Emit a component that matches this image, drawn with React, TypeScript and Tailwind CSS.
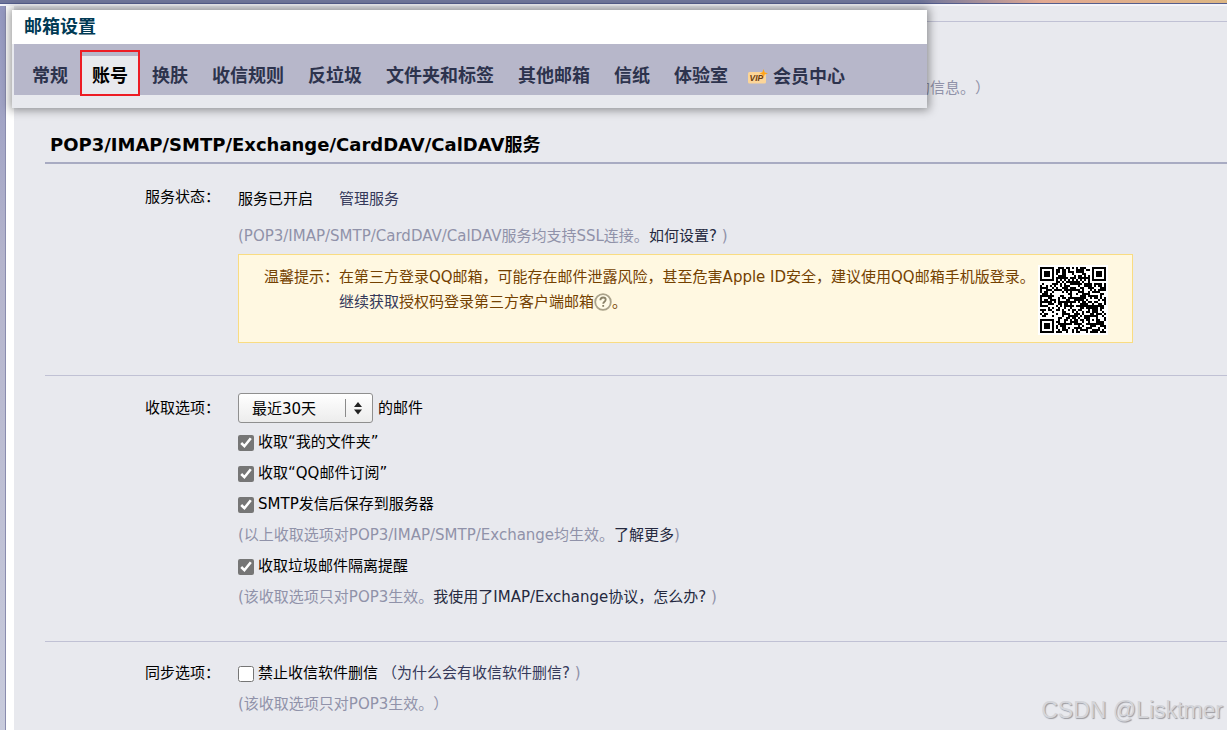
import React from "react";

const tabs = [
  "常规",
  "账号",
  "换肤",
  "收信规则",
  "反垃圾",
  "文件夹和标签",
  "其他邮箱",
  "信纸",
  "体验室",
];

const QR_SIZE = 33;

const finders = [
  [0, 0],
  [QR_SIZE - 7, 0],
  [0, QR_SIZE - 7],
];

// ring of size 7 with a 3x3 centre, null outside the finder areas
const finderModule = (x: number, y: number) => {
  for (const [fx, fy] of finders) {
    const dx = x - fx;
    const dy = y - fy;
    if (dx >= -1 && dx <= 7 && dy >= -1 && dy <= 7) {
      const d = Math.max(Math.abs(dx - 3), Math.abs(dy - 3));
      return d === 3 || d <= 1;
    }
  }
  return null;
};

const isDark = (x: number, y: number) => {
  const finder = finderModule(x, y);
  if (finder !== null) return finder;
  const a = Math.max(Math.abs(x - 26), Math.abs(y - 26));
  if (a <= 2) return a !== 1;
  if (x === 6) return y % 2 === 0;
  if (y === 6) return x % 2 === 0;
  const n = Math.sin(x * 12.9898 + y * 78.233) * 43758.5453;
  return n - Math.floor(n) > 0.46;
};

const qrPath = () => {
  let d = "";
  for (let y = 0; y < QR_SIZE; y++) {
    for (let x = 0; x < QR_SIZE; x++) {
      if (isDark(x, y)) d += `M${x} ${y}h1v1h-1z`;
    }
  }
  return d;
};

const QrCode = () => (
  <svg
    className="w-[70px] h-[70px] shrink-0 bg-white"
    viewBox="-1 -1 35 35"
    shapeRendering="crispEdges"
    role="img"
  >
    <path d={qrPath()} fill="#000" />
  </svg>
);

const VipIcon = () => (
  <svg className="w-5 h-4" viewBox="0 0 20 16">
    <rect x="0" y="3" width="18" height="11.5" rx="1.5" fill="#fcd598" />
    <text
      x="1.5"
      y="11.8"
      fontSize="8.5"
      fontWeight="700"
      fontStyle="italic"
      fontFamily="Liberation Sans, sans-serif"
      fill="#6b3d12"
    >
      VIP
    </text>
    <path
      d="M15.5 0 L16.6 3.2 L20 4.4 L16.6 5.6 L15.5 9 L14.4 5.6 L11.5 4.4 L14.4 3.2 Z"
      fill="#ffa41c"
    />
  </svg>
);

const HelpIcon = () => (
  <svg className="inline-block w-[18px] h-[18px] align-[-4px]" viewBox="0 0 18 18">
    <circle cx="9" cy="9" r="7.8" fill="#fffbe8" stroke="#aaa28a" strokeWidth="1.8" />
    <path
      d="M6.4 7.2c0-1.7 1.1-2.7 2.7-2.7s2.6 1 2.6 2.3c0 1.9-2.5 1.9-2.5 3.9"
      fill="none"
      stroke="#8a8268"
      strokeWidth="1.8"
    />
    <rect x="8.3" y="12" width="1.8" height="1.8" fill="#8a8268" />
  </svg>
);

const Check = ({
  label,
  checked = false,
}: {
  label: string;
  checked?: boolean;
}) => (
  <label className="flex items-center gap-1">
    <input
      type="checkbox"
      defaultChecked={checked}
      className="size-4 accent-[#767676]"
    />
    {label}
  </label>
);

const Row = ({
  label,
  children,
}: {
  label: string;
  children: React.ReactNode;
}) => (
  <div className="flex gap-[18px]">
    <div className="w-[175px] shrink-0 text-right leading-[31px]">{label}</div>
    <div className="grow leading-[31px]">{children}</div>
  </div>
);

const SettingsPanel = () => (
  <div className="absolute left-3 top-[10px] w-[915px] bg-[#e8e9ee] pb-[13px] shadow-[0_0_9px_2px_rgba(0,0,0,0.4)]">
    <h1 className="h-[34px] bg-white pl-3 text-lg leading-[34px] font-bold text-[#003a54]">
      邮箱设置
    </h1>
    <nav className="ml-[2px] flex h-[51px] bg-[#b7b7ca] pl-[6px] text-lg font-bold">
      {tabs.map((tab) =>
        tab === "账号" ? (
          <a
            key={tab}
            href="#"
            className="-mb-px mt-[6px] border-2 border-[#ed1c24] bg-[#e8e9ee] text-black"
          >
            <span className="block border-t-4 border-[#b7b7ca] px-[10px] leading-[40px]">
              {tab}
            </span>
          </a>
        ) : (
          <a
            key={tab}
            href="#"
            className="px-3 leading-[64px] text-[#2d334d]"
          >
            {tab}
          </a>
        )
      )}
      <a
        href="#"
        className="flex items-center gap-[5px] px-2 pt-[14px] text-[#2d334d]"
      >
        <VipIcon />
        会员中心
      </a>
    </nav>
  </div>
);

const App = () => {
  return (
    <div className="relative flex min-h-screen flex-col overflow-hidden bg-[#e8e9ee] font-['DejaVu_Sans','Noto_Sans_CJK_SC',sans-serif] text-[15px] text-black [text-spacing-trim:space-all]">
      <div className="h-1 border-b border-[#555e8d] bg-linear-to-r from-[#70769b] from-75% via-[#e3a992] via-85% to-[#dcb683]" />
      <div className="h-[2px] bg-[#f4f4f9]" />
      <div className="flex grow">
        <div className="w-[6px] shrink-0 border-r border-[#8a8cae] bg-linear-to-b from-[#9498c0] via-[#b4b4cc] via-35% to-[#c8cbdc]" />
        <div className="w-2 shrink-0 bg-white" />
        <main className="grow pl-[31px]">
          <div className="mt-[15px] border-t border-[#c0c1d4]" />
          <p className="pt-[51px] pl-[870px] leading-[31px] whitespace-nowrap text-[#9092a9]">
            的信息。）
          </p>
          <h2 className="mt-[26px] border-b-2 border-[#a8abc2] pb-[2px] pl-[5px] text-lg leading-[30px] font-bold">
            POP3/IMAP/SMTP/Exchange/CardDAV/CalDAV服务
          </h2>

          <section className="pt-[18px] pb-8">
            <Row label="服务状态：">
              <p className="pt-[2px]">
                服务已开启
                <a href="#" className="ml-[26px] text-[#35395a]">
                  管理服务
                </a>
              </p>
              <p className="mt-[6px] text-[#9092a9]">
                (POP3/IMAP/SMTP/CardDAV/CalDAV服务均支持SSL连接。
                <a href="#" className="text-[#25293f]">
                  如何设置?
                </a>
                {" "})
              </p>
              <div className="mt-[2px] flex h-[89px] w-[895px] border border-[#f9dc82] bg-[#fff8e1] pt-[10px] pl-[25px] leading-[25px] text-[#744100]">
                <span className="w-[75px] shrink-0">温馨提示：</span>
                <p className="w-[699px] whitespace-nowrap">
                  在第三方登录QQ邮箱，可能存在邮件泄露风险，甚至危害Apple
                  ID安全，建议使用QQ邮箱手机版登录。
                  <br />
                  <a href="#" className="text-[#35395a]">
                    继续获取
                  </a>
                  授权码登录第三方客户端邮箱
                  <HelpIcon />。
                </p>
                <QrCode />
              </div>
            </Row>
          </section>

          <section className="border-t border-[#c0c1d4] pt-[17px] pb-7">
            <Row label="收取选项：">
              <div className="mb-1 flex items-center gap-[5px]">
                <div className="relative flex">
                  <select
                    aria-label="收取选项"
                    className="h-[30px] w-[135px] appearance-none rounded-[3px] border border-[#8f8f8f] bg-linear-to-b from-white to-[#ececec] pl-[13px]"
                  >
                    <option>最近30天</option>
                  </select>
                  <svg
                    className="pointer-events-none absolute top-[5px] right-[9px] h-5 w-5"
                    viewBox="0 0 20 20"
                  >
                    <path d="M1.5 1v18" stroke="#8a8a8a" />
                    <path d="M10 9l4-5 4 5zM10 11.5h8l-4 5z" fill="#222" />
                  </svg>
                </div>
                <span className="leading-[28px]">的邮件</span>
              </div>
              <Check label="收取“我的文件夹”" checked />
              <Check label="收取“QQ邮件订阅”" checked />
              <Check label="SMTP发信后保存到服务器" checked />
              <p className="text-[#9092a9]">
                (以上收取选项对POP3/IMAP/SMTP/Exchange均生效。
                <a href="#" className="text-[#25293f]">
                  了解更多
                </a>
                )
              </p>
              <Check label="收取垃圾邮件隔离提醒" checked />
              <p className="text-[#9092a9]">
                (该收取选项只对POP3生效。
                <a href="#" className="text-[#25293f]">
                  我使用了IMAP/Exchange协议，怎么办?
                </a>
                {" "})
              </p>
            </Row>
          </section>

          <section className="border-t border-[#c0c1d4] pt-4">
            <Row label="同步选项：">
              <div className="flex items-center">
                <Check label="禁止收信软件删信" />
                <a href="#" className="ml-1 text-[#35395a]">
                  （为什么会有收信软件删信? <span className="text-[#9092a9]">)</span>
                </a>
              </div>
              <p className="text-[#9092a9]">(该收取选项只对POP3生效。）</p>
            </Row>
          </section>
        </main>
      </div>
      <SettingsPanel />
      <div className="absolute right-1 bottom-[3px] font-['Liberation_Sans',sans-serif] text-[23px] text-[#d4d5da] [text-shadow:1px_1px_1px_#9a9aa0]">
        CSDN @Lisktmer
      </div>
    </div>
  );
};

export default App;
